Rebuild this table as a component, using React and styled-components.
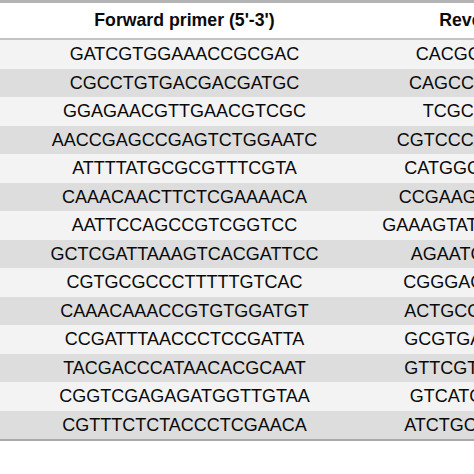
import React from "react";
import styled, { createGlobalStyle } from "styled-components";

const Global = createGlobalStyle`
  html, body { margin: 0; padding: 0; background: #ffffff; }
  body { font-family: "Liberation Sans", Arial, sans-serif; overflow: hidden; }
`;

const Viewport = styled.div`
  width: 474px;
  height: 474px;
  overflow: hidden;
  background: #ffffff;
`;

const Table = styled.div`
  width: 689px;
  border-top: 3px solid #b3b3b3;
  border-bottom: 2px solid #a9a9a9;
`;

const Row = styled.div`
  display: grid;
  grid-template-columns: 369px 320px;
  height: ${(p) => (p.$header ? "35px" : "28.5px")};
  align-items: center;
  background: ${(p) => (p.$header ? "#ffffff" : p.$odd ? "#f3f3f3" : "#dddddd")};
  border-bottom: ${(p) => (p.$header ? "2px solid #c4c4c4" : "none")};
`;

const Cell = styled.div`
  text-align: center;
  white-space: nowrap;
  color: #0a0a0a;
  font-size: ${(p) => (p.$header ? "17.7px" : "18px")};
  font-weight: ${(p) => (p.$header ? 700 : 400)};
  line-height: 1;
`;

const rows = [
  ["GATCGTGGAAACCGCGAC", "CACGCTGGTAGCCACGTT"],
  ["CGCCTGTGACGACGATGC", "CAGCCTTGGTCGAGTGACT"],
  ["GGAGAACGTTGAACGTCGC", "TCGCCATCGTCACTGCC"],
  ["AACCGAGCCGAGTCTGGAATC", "CGTCCCAGTCGGTCACGTAAC"],
  ["ATTTTATGCGCGTTTCGTA", "CATGGCTCGATGACCGTTGA"],
  ["CAAACAACTTCTCGAAAACA", "CCGAAGTCGTACGATCCTTGA"],
  ["AATTCCAGCCGTCGGTCC", "GAAAGTATCGTCAACGATCCGTAC"],
  ["GCTCGATTAAAGTCACGATTCC", "AGAATCGCGTTGATCCACG"],
  ["CGTGCGCCCTTTTTGTCAC", "CGGGACTTCGATGCCGTAAC"],
  ["CAAACAAACCGTGTGGATGT", "ACTGCGTCAAGCTCGATTCG"],
  ["CCGATTTAACCCTCCGATTA", "GCGTGATCCGTCAAGCTTCA"],
  ["TACGACCCATAACACGCAAT", "GTTCGTCAGCCTCGATGACA"],
  ["CGGTCGAGAGATGGTTGTAA", "GTCATGCGAACCTGTCGCA"],
  ["CGTTTCTCTACCCTCGAACA", "ATCTGCGTCGAACGTCTCGA"],
];

export default function App() {
  return (
    <Viewport>
      <Global />
      <Table>
        <Row $header>
          <Cell $header>Forward primer (5'-3')</Cell>
          <Cell $header>Reverse primer (5'-3')</Cell>
        </Row>
        {rows.map(([f, r], i) => (
          <Row key={i} $odd={i % 2 === 0}>
            <Cell>{f}</Cell>
            <Cell>{r}</Cell>
          </Row>
        ))}
      </Table>
    </Viewport>
  );
}
